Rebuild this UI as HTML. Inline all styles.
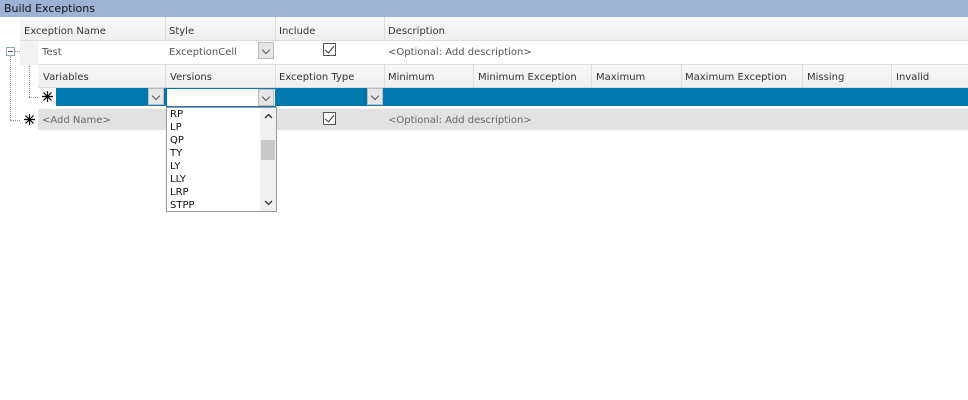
<!DOCTYPE html>
<html><head><style>
body{margin:0;width:968px;height:400px;background:#fff;position:relative;overflow:hidden;font-family:"DejaVu Sans","Liberation Sans",sans-serif;font-size:10px;color:#333}
div{position:absolute;box-sizing:border-box}
svg{position:absolute}
.t{white-space:nowrap}
.hdr{background:linear-gradient(#f8f8f8,#efefef);border-bottom:1px solid #ddd}
.vl{width:1px;background:#ddd}
.dd{width:16px;height:17px;background:#e6e6e6;border:1px solid #bbb}
.dd:after{content:"";position:absolute;left:4px;top:4px;width:5px;height:5px;border-right:1px solid #555;border-bottom:1px solid #555;transform:rotate(45deg)}
.cb{width:13px;height:13px;border:1px solid #555;background:#fff}
.cb:after{content:"";position:absolute;left:3px;top:0px;width:4px;height:8px;border-right:1.5px solid #333;border-bottom:1.5px solid #333;transform:rotate(40deg)}
.li{left:3px;font-size:10px;color:#111}
</style></head><body>
<div style="left:0;top:0;width:968px;height:17px;background:#9cb3d3"></div>
<div class="t" style="left:4px;top:2px;font-size:11px;color:#111">Build Exceptions</div>

<div class="hdr" style="left:20px;top:17px;width:948px;height:24px"></div>
<div class="t" style="left:24px;top:26px">Exception Name</div>
<div class="t" style="left:169px;top:26px">Style</div>
<div class="t" style="left:279px;top:26px">Include</div>
<div class="t" style="left:388px;top:26px">Description</div>
<div class="vl" style="left:165px;top:17px;height:24px"></div>
<div class="vl" style="left:275px;top:17px;height:24px"></div>
<div class="vl" style="left:384px;top:17px;height:24px"></div>

<div style="left:20px;top:41px;width:948px;height:24px;background:#fff;border-bottom:1px solid #ddd"></div>
<div style="left:20px;top:41px;width:18px;height:24px;background:#f2f2f2"></div>
<div style="left:6px;top:47px;width:9px;height:9px;border:1px solid #8aa;background:#fff"></div>
<div style="left:8px;top:51px;width:5px;height:1px;background:#555"></div>
<div class="t" style="left:42px;top:47px;color:#555">Test</div>
<div class="t" style="left:169px;top:47px;color:#555">ExceptionCell</div>
<div class="dd" style="left:258px;top:42px"></div>
<div class="cb" style="left:323px;top:43px"></div>
<div class="t" style="left:388px;top:47px;color:#555">&lt;Optional: Add description&gt;</div>

<div class="hdr" style="left:38px;top:65px;width:930px;height:23px"></div>
<div class="t" style="left:43px;top:72px">Variables</div>
<div class="t" style="left:170px;top:72px">Versions</div>
<div class="t" style="left:279px;top:72px">Exception Type</div>
<div class="t" style="left:388px;top:72px">Minimum</div>
<div class="t" style="left:478px;top:72px">Minimum Exception</div>
<div class="t" style="left:596px;top:72px">Maximum</div>
<div class="t" style="left:685px;top:72px">Maximum Exception</div>
<div class="t" style="left:807px;top:72px">Missing</div>
<div class="t" style="left:896px;top:72px">Invalid</div>
<div class="vl" style="left:165px;top:65px;height:23px"></div>
<div class="vl" style="left:275px;top:65px;height:23px"></div>
<div class="vl" style="left:384px;top:65px;height:23px"></div>
<div class="vl" style="left:473px;top:65px;height:23px"></div>
<div class="vl" style="left:591px;top:65px;height:23px"></div>
<div class="vl" style="left:681px;top:65px;height:23px"></div>
<div class="vl" style="left:802px;top:65px;height:23px"></div>
<div class="vl" style="left:891px;top:65px;height:23px"></div>

<div style="left:38px;top:88px;width:930px;height:18px;background:#0077ad"></div>
<div style="left:38px;top:88px;width:18px;height:18px;background:#fff"></div>
<svg style="left:42px;top:91px" width="11" height="11" viewBox="0 0 11 11" stroke="#000" stroke-width="1.2"><path d="M5.5 0V11M0 5.5H11M1.5 1.5L9.5 9.5M9.5 1.5L1.5 9.5"/></svg>
<div class="dd" style="left:148px;top:88px"></div>
<div style="left:166px;top:88px;width:110px;height:19px;background:#fff;border:1px solid #0077ad"></div>
<div class="dd" style="left:258px;top:89px"></div>
<div class="dd" style="left:367px;top:88px"></div>

<div style="left:20px;top:109px;width:948px;height:21px;background:#e2e2e2"></div>
<div style="left:20px;top:109px;width:18px;height:21px;background:#fff"></div>
<svg style="left:24px;top:114px" width="11" height="11" viewBox="0 0 11 11" stroke="#000" stroke-width="1.2"><path d="M5.5 0V11M0 5.5H11M1.5 1.5L9.5 9.5M9.5 1.5L1.5 9.5"/></svg>
<div class="t" style="left:42px;top:115px;color:#666">&lt;Add Name&gt;</div>
<div class="cb" style="left:323px;top:112px"></div>
<div class="t" style="left:388px;top:115px;color:#666">&lt;Optional: Add description&gt;</div>

<div style="left:10px;top:56px;width:1px;height:64px;border-left:1px dotted #999"></div>
<div style="left:10px;top:120px;width:10px;height:1px;border-top:1px dotted #999"></div>
<div style="left:15px;top:51px;width:5px;height:1px;border-top:1px dotted #999"></div>
<div style="left:29px;top:65px;width:1px;height:32px;border-left:1px dotted #999"></div>
<div style="left:29px;top:97px;width:9px;height:1px;border-top:1px dotted #999"></div>

<div style="left:166px;top:107px;width:111px;height:105px;background:#fff;border:1px solid #999">
<div class="t li" style="top:1px">RP</div>
<div class="t li" style="top:14px">LP</div>
<div class="t li" style="top:27px">QP</div>
<div class="t li" style="top:40px">TY</div>
<div class="t li" style="top:53px">LY</div>
<div class="t li" style="top:66px">LLY</div>
<div class="t li" style="top:79px">LRP</div>
<div class="t li" style="top:92px">STPP</div>
<div style="left:93px;top:0;width:16px;height:103px;background:#f0f0f0"></div>
<div style="left:94px;top:32px;width:14px;height:20px;background:#c8c8c8"></div>
<svg style="left:97px;top:5px" width="9" height="6" viewBox="0 0 9 6" fill="none" stroke="#333" stroke-width="1.3"><path d="M1 5L4.5 1.5L8 5"/></svg>
<svg style="left:97px;top:92px" width="9" height="6" viewBox="0 0 9 6" fill="none" stroke="#333" stroke-width="1.3"><path d="M1 1L4.5 4.5L8 1"/></svg>
</div>
</body></html>
